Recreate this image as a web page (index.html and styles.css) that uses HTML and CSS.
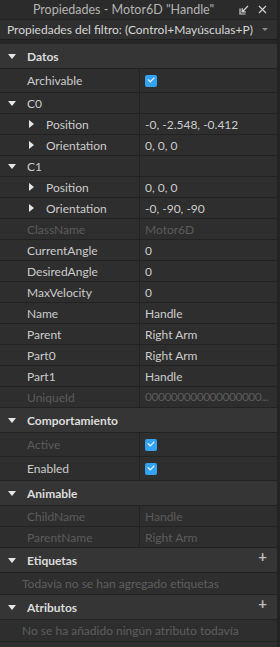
FILE: index.html
```html
<!DOCTYPE html>
<html lang="es">
<head>
<meta charset="utf-8">
<link rel="stylesheet" href="styles.css">
</head>
<body>
<div class="panel">
  <div class="titlebar">
    <div class="title">Propiedades - Motor6D "Handle"</div>
    <div class="tb-icons">
      <svg class="ic-undock" width="10" height="10" viewBox="0 0 10 10"><path d="M1 3.5V9h5.5" fill="none" stroke="#d0d0d0" stroke-width="1.2"/><path d="M9 1L3.5 6.5M3.2 3.2v3.6h3.6" fill="none" stroke="#d0d0d0" stroke-width="1.3"/></svg>
      <svg class="ic-close" width="9" height="9" viewBox="0 0 9 9"><path d="M1 1l7 7M8 1L1 8" stroke="#d0d0d0" stroke-width="1.2"/></svg>
    </div>
  </div>
  <div class="filter">
    <span class="filter-text">Propiedades del filtro: (Control+Mayúsculas+P)</span>
    <span class="dd-arrow"></span>
  </div>
  <div class="gap"></div>

  <div class="section"><span class="tri-down"></span><span class="sec-label">Datos</span></div>
  <div class="row tall"><div class="name">Archivable</div><div class="val"><span class="cb"></span></div></div>
  <div class="row group"><div class="name"><span class="tri-down small"></span>C0</div><div class="val"></div></div>
  <div class="row"><div class="name sub"><span class="tri-right"></span>Position</div><div class="val">-0, -2.548, -0.412</div></div>
  <div class="row"><div class="name sub"><span class="tri-right"></span>Orientation</div><div class="val">0, 0, 0</div></div>
  <div class="row group"><div class="name"><span class="tri-down small"></span>C1</div><div class="val"></div></div>
  <div class="row"><div class="name sub"><span class="tri-right"></span>Position</div><div class="val">0, 0, 0</div></div>
  <div class="row"><div class="name sub"><span class="tri-right"></span>Orientation</div><div class="val">-0, -90, -90</div></div>
  <div class="row dis"><div class="name">ClassName</div><div class="val">Motor6D</div></div>
  <div class="row"><div class="name">CurrentAngle</div><div class="val">0</div></div>
  <div class="row"><div class="name">DesiredAngle</div><div class="val">0</div></div>
  <div class="row"><div class="name">MaxVelocity</div><div class="val">0</div></div>
  <div class="row"><div class="name">Name</div><div class="val">Handle</div></div>
  <div class="row"><div class="name">Parent</div><div class="val">Right Arm</div></div>
  <div class="row"><div class="name">Part0</div><div class="val">Right Arm</div></div>
  <div class="row"><div class="name">Part1</div><div class="val">Handle</div></div>
  <div class="row dis"><div class="name">UniqueId</div><div class="val ell">000000000000000000...</div></div>

  <div class="section"><span class="tri-down"></span><span class="sec-label">Comportamiento</span></div>
  <div class="row tall dis"><div class="name">Active</div><div class="val"><span class="cb"></span></div></div>
  <div class="row tall"><div class="name">Enabled</div><div class="val"><span class="cb"></span></div></div>

  <div class="section"><span class="tri-down"></span><span class="sec-label">Animable</span></div>
  <div class="row dis"><div class="name">ChildName</div><div class="val">Handle</div></div>
  <div class="row dis"><div class="name">ParentName</div><div class="val">Right Arm</div></div>

  <div class="section"><span class="tri-down"></span><span class="sec-label">Etiquetas</span><span class="plus">+</span></div>
  <div class="empty">Todavía no se han agregado etiquetas</div>

  <div class="section"><span class="tri-down"></span><span class="sec-label">Atributos</span><span class="plus">+</span></div>
  <div class="empty">No se ha añadido ningún atributo todavía</div>
</div>
</body>
</html>
```
FILE: styles.css
```css
* { box-sizing: border-box; }
html, body { margin: 0; padding: 0; }
body {
  width: 280px;
  height: 647px;
  background: #2a2a2a;
  font-family: "Lato", "Noto Sans", sans-serif;
  font-size: 12px;
  color: #cccccc;
  overflow: hidden;
}
.panel {
  width: 280px;
  height: 647px;
  background: #2e2e2e;
  border-right: 3px solid #232323;
  display: flex;
  flex-direction: column;
}
.titlebar {
  height: 19px;
  flex: none;
  display: flex;
  align-items: center;
  background: #2b2b2b;
}
.title {
  flex: 1;
  text-align: center;
  padding-left: 14px;
  color: #b4b4b4;
  font-size: 12.5px;
}
.tb-icons {
  width: 44px;
  display: flex;
  align-items: center;
  gap: 9px;
  padding-left: 6px;
}
.filter {
  height: 21px;
  flex: none;
  display: flex;
  align-items: center;
  padding: 0 7px;
  background: #2f2f2f;
  border-top: 1px solid #232323;
  border-bottom: 1px solid #1e1e1e;
}
.filter-text { flex: 1; color: #d6d6d6; white-space: nowrap; }
.dd-arrow {
  width: 0; height: 0;
  border-left: 3px solid transparent;
  border-right: 3px solid transparent;
  border-top: 3px solid #8a8a8a;
  margin-right: 2px;
}
.gap { height: 4px; flex: none; background: #262626; }

.section {
  height: 25px;
  flex: none;
  display: flex;
  align-items: center;
  background: #353535;
  border-bottom: 1px solid #222222;
  padding-left: 8px;
  position: relative;
}
.sec-label { font-weight: bold; color: #dcdcdc; margin-left: 11px; }
.tri-down {
  width: 0; height: 0;
  border-left: 4px solid transparent;
  border-right: 4px solid transparent;
  border-top: 5px solid #e6e6e6;
}
.tri-down.small { margin-left: -19px; margin-right: 11px; }
.tri-right {
  width: 0; height: 0;
  border-top: 4px solid transparent;
  border-bottom: 4px solid transparent;
  border-left: 5px solid #e6e6e6;
  margin-left: -17px;
  margin-right: 12px;
}
.plus {
  position: absolute;
  right: 10px;
  top: -1px;
  font-size: 15px;
  font-weight: bold;
  color: #bdbdbd;
}
.row {
  height: 21px;
  flex: none;
  display: grid;
  grid-template-columns: 140px 1fr;
  border-bottom: 1px solid #222222;
}
.row.tall { height: 24px; }
.name {
  display: flex;
  align-items: center;
  padding-left: 27px;
  border-right: 1px solid #222222;
  white-space: nowrap;
}
.name.sub { padding-left: 46px; }
.val {
  display: flex;
  align-items: center;
  padding-left: 5px;
  white-space: nowrap;
  overflow: hidden;
}
.val.ell { display: block; line-height: 20px; letter-spacing: -0.5px; }
.dis .name, .dis .val { color: #5c5c5c; }
.cb {
  width: 12px; height: 12px;
  border-radius: 2px;
  background: #35a3f3;
  position: relative;
}
.cb::after {
  content: "";
  position: absolute;
  left: 3px; top: 2px;
  width: 5px; height: 3px;
  border-left: 1.6px solid #fff;
  border-bottom: 1.6px solid #fff;
  transform: rotate(-45deg);
}
.empty {
  height: 22px;
  flex: none;
  display: flex;
  align-items: center;
  padding-left: 22px;
  color: #5e5e5e;
  border-bottom: 1px solid #222222;
}
```
